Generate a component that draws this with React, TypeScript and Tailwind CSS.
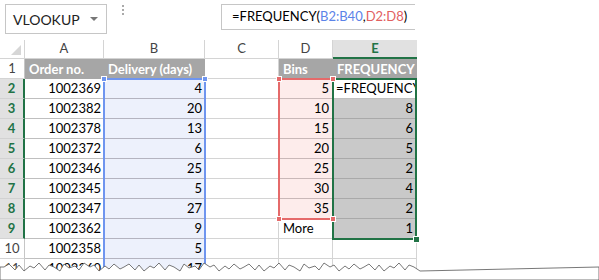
const rows: [string, string, string, string][] = [
  ["1002369", "4", "5", "=FREQUENCY"],
  ["1002382", "20", "10", "8"],
  ["1002378", "13", "15", "6"],
  ["1002372", "6", "20", "5"],
  ["1002346", "25", "25", "2"],
  ["1002345", "5", "30", "4"],
  ["1002347", "27", "35", "2"],
  ["1002362", "9", "More", "1"],
  ["1002358", "5", "", ""],
  ["1002360", "17", "", ""],
];

// jagged "torn paper" edge at the bottom
const tornPoints = (() => {
  const offs = [4, 1, 7, 2, 8, 3, 5, 0, 7, 2, 4, 8, 1, 5, 3, 7, 0, 4, 2, 8, 3, 6, 1, 6];
  const pts: [number, number][] = [[0, 4]];
  let x = 0;
  let i = 0;
  while (x < 420) {
    x += 4 + (i % 3);
    pts.push([x, offs[i % offs.length]]);
    i++;
  }
  return pts;
})();

const shifted = (dy: number) => tornPoints.map(([x, y]) => `${x},${y + dy}`).join(" ");

const RowHeader = ({ n, selected }: { n: number; selected: boolean }) => (
  <div
    className={`flex h-[20px] w-[25px] shrink-0 items-center justify-center border-b pt-[1px] ${
      selected
        ? "border-b-[#d2d2d2] border-r-2 border-r-[#217346] bg-[#e1e1e1] font-bold text-[#217346]"
        : "border-b-[#d4d4d4] border-r border-r-[#c6c6c6] bg-white text-[#444]"
    }`}
  >
    {n}
  </div>
);

const App = () => {
  return (
    <div className="relative h-[280px] w-[599px] overflow-hidden bg-white font-['Lato',sans-serif] text-[13px] text-black">
      {/* name box + formula bar */}
      <div className="flex h-[40px] items-start">
        <div className="ml-[5px] mt-[4px] flex h-[30px] w-[102px] items-center justify-between border border-[#c6c6c6] pl-[7px] pr-[8px] text-[14px] text-[#222]">
          <span>VLOOKUP</span>
          <span className="h-0 w-0 border-x-[4px] border-t-[4px] border-x-transparent border-t-[#777]" />
        </div>
        <div className="ml-[15px] mt-[5px] flex flex-col gap-[2px]">
          <span className="h-[2px] w-[2px] bg-[#aaa]" />
          <span className="h-[2px] w-[2px] bg-[#aaa]" />
          <span className="h-[2px] w-[2px] bg-[#aaa]" />
        </div>
        <div className="ml-[97px] mt-[4px] flex h-[26px] w-[194px] items-center border-y border-l border-[#c6c6c6] pl-[10px] text-[13px] whitespace-nowrap">
          =FREQUENCY(<span className="text-[#5b83e8]">B2:B40</span>,
          <span className="text-[#e2605f]">D2:D8</span>)
        </div>
      </div>

      <div className="relative">
        {/* column header row */}
        <div className="flex h-[19px] text-[#444]">
          <div className="relative w-[25px] shrink-0 border-r border-b border-[#d4d4d4]">
            <svg className="absolute right-[3px] bottom-[3px]" width="10" height="10">
              <polygon points="10,0 10,10 0,10" fill="#d6d6d6" />
            </svg>
          </div>
          <div className="flex w-[79px] shrink-0 items-center justify-center border-r border-b border-[#d4d4d4]">A</div>
          <div className="flex w-[101px] shrink-0 items-center justify-center border-r border-b border-[#d4d4d4]">B</div>
          <div className="flex w-[74px] shrink-0 items-center justify-center border-r border-b border-[#d4d4d4]">C</div>
          <div className="flex w-[54px] shrink-0 items-center justify-center border-r border-b border-[#d4d4d4]">D</div>
          <div className="flex w-[84px] shrink-0 items-center justify-center border-b-2 border-b-[#217346] bg-[#e1e1e1] font-bold text-[#217346]">
            E
          </div>
        </div>

        {/* row 1 - table headings */}
        <div className="flex h-[20px]">
          <RowHeader n={1} selected={false} />
          <div className="flex w-[180px] shrink-0 items-center bg-[#a6a6a6] pt-[1px] font-bold text-white">
            <span className="w-[79px] pl-[4px]">Order no.</span>
            <span className="pl-[4px]">Delivery (days)</span>
          </div>
          <div className="w-[74px] shrink-0 border-r border-b border-[#d4d4d4]" />
          <div className="flex w-[138px] shrink-0 items-center bg-[#a6a6a6] pt-[1px] font-bold text-white">
            <span className="w-[54px] pl-[4px]">Bins</span>
            <span className="pl-[4px]">FREQUENCY</span>
          </div>
        </div>

        {rows.map(([a, b, d, e], i) => {
          const r = i + 2;
          const inD = r <= 8;
          const inE = r <= 9;
          return (
            <div key={r} className="flex h-[20px]">
              <RowHeader n={r} selected={r <= 9} />
              <div className="flex w-[79px] shrink-0 items-center justify-end border-r border-b border-[#bfbfbf] pt-[1px] pr-[2px]">
                {a}
              </div>
              <div className="flex w-[101px] shrink-0 items-center justify-end border-b border-[#b4b4c0] bg-[#edf1fc] pt-[1px] pr-[3px]">
                {b}
              </div>
              <div className="w-[74px] shrink-0 border-r border-b border-[#d4d4d4]" />
              <div
                className={`flex w-[54px] shrink-0 items-center border-r border-b pt-[1px] ${
                  inD
                    ? "justify-end border-[#c9b8b8] bg-[#fdeceb] pr-[3px]"
                    : "justify-start border-[#d4d4d4] pl-[4px]"
                }`}
              >
                {d}
              </div>
              <div
                className={`flex w-[84px] shrink-0 items-center overflow-hidden border-b pt-[1px] whitespace-nowrap ${
                  r === 2
                    ? "justify-start border-[#bfbfbf] bg-white pl-[3px]"
                    : inE
                    ? "justify-end border-[#a9a9a9] bg-[#c9c9c9] pr-[4px]"
                    : "border-r border-[#d4d4d4]"
                }`}
              >
                {e}
              </div>
            </div>
          );
        })}

        {/* range outlines of the formula being edited */}
        <div className="absolute top-[38px] left-[103px] h-[260px] w-[103px] border-2 border-[#6f95ef]" />
        <div className="absolute top-[38px] left-[278px] h-[142px] w-[56px] border-2 border-[#e56a6a]" />
        <div className="absolute top-[38px] left-[332px] h-[162px] w-[85px] border-2 border-[#217346]" />

        {/* handles */}
        <div className="absolute top-[36px] left-[101px] h-[6px] w-[6px] border border-white bg-[#6f95ef]" />
        <div className="absolute top-[36px] left-[202px] h-[6px] w-[6px] border border-white bg-[#6f95ef]" />
        <div className="absolute top-[36px] left-[276px] h-[6px] w-[6px] border border-white bg-[#e56a6a]" />
        <div className="absolute top-[36px] left-[330px] h-[6px] w-[6px] border border-white bg-[#e56a6a]" />
        <div className="absolute top-[176px] left-[276px] h-[6px] w-[6px] border border-white bg-[#e56a6a]" />
        <div className="absolute top-[176px] left-[330px] h-[6px] w-[6px] border border-white bg-[#e56a6a]" />
        <div className="absolute top-[196px] left-[413px] h-[7px] w-[7px] border border-white bg-[#217346]" />
      </div>

      {/* torn edge */}
      <svg className="absolute bottom-0 left-0" width="599" height="19">
        <polygon points={`${shifted(4)} 599,8 599,19 0,19`} fill="#c4c4c4" />
        <polygon points={`${shifted(2)} 599,6 599,19 0,19`} fill="white" stroke="#555" strokeWidth="0.8" />
      </svg>
    </div>
  );
};

export default App;
